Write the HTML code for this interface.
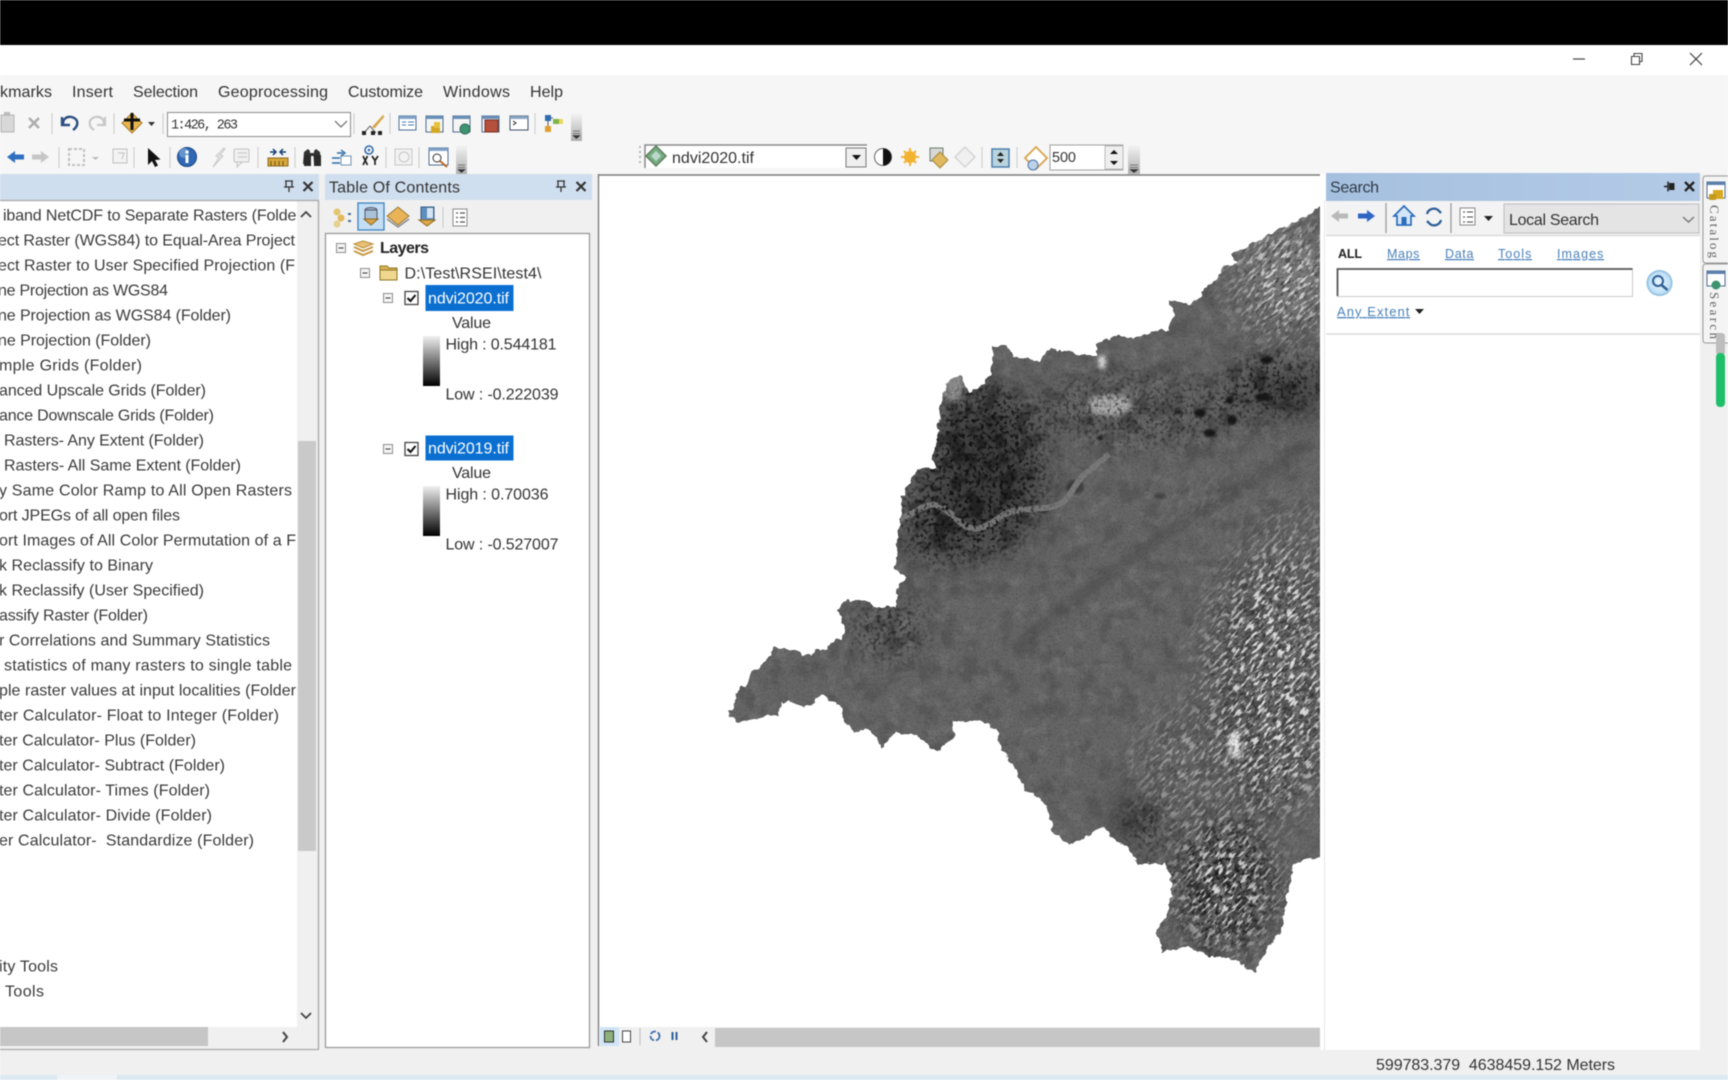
<!DOCTYPE html>
<html lang="en"><head><meta charset="utf-8"><title>ArcMap</title>
<style>
html,body{margin:0;padding:0;background:#fff;width:1728px;height:1080px;overflow:hidden}
svg{display:block;position:absolute;left:0;top:0;filter:blur(.45px)}
text{font-family:"Liberation Sans",sans-serif;font-size:16px;fill:#333}
.l{font-size:16px;fill:#3a3a3a}
.lnk{font-family:"Liberation Sans",sans-serif;font-size:12.5px;fill:#4a80b8;text-decoration:underline;letter-spacing:.6px}
</style></head><body>
<svg width="1728" height="1080" viewBox="0 0 1728 1080" xmlns="http://www.w3.org/2000/svg">
<defs>
<clipPath id="cl"><rect x="0" y="200" width="296" height="830"/></clipPath>
<clipPath id="cm"><rect x="600" y="176" width="720" height="850"/></clipPath>
<filter id="jag" x="-5%" y="-5%" width="110%" height="110%" color-interpolation-filters="sRGB"><feTurbulence type="fractalNoise" baseFrequency=".14" numOctaves="2" seed="7" result="n"/><feDisplacementMap in="SourceGraphic" in2="n" scale="8" xChannelSelector="R" yChannelSelector="G"/></filter>
<mask id="landM" maskUnits="userSpaceOnUse" x="600" y="170" width="730" height="860"><path filter="url(#jag)" fill="#fff" d="M1330 205L1320 207 1300 220 1277 230 1253 243 1233 255 1237 263 1223 267 1217 280 1202 290 1202 297 1187 303 1168 300 1175 313 1167 330 1143 335 1133 340 1117 335 1098 343 1097 355 1082 355 1063 350 1047 350 1040 360 1013 357 1007 347 992 347 993 363 988 377 980 387 970 393 960 375 945 383 943 397 940 413 937 440 932 460 937 467 920 467 912 480 902 495 903 508 900 520 897 540 896 570 906 578 898 585 896 600 896 607 872 607 870 600 847 600 839 608 841 620 847 630 839 640 831 642 827 650 816 650 810 655 796 652 786 648 773 648 769 658 753 670 747 683 737 690 735 703 728 712 737 722 761 718 778 715 782 702 810 706 820 695 841 707 843 718 855 733 869 728 882 747 896 732 916 735 937 752 955 735 953 722 982 720 998 733 1000 747 1016 770 1024 790 1039 797 1051 817 1051 830 1069 845 1102 827 1133 853 1137 865 1165 863 1173 887 1165 917 1155 932 1163 952 1188 947 1210 957 1231 957 1255 973 1259 963 1282 927 1288 890 1294 863 1320 857 1330 855Z"/></mask>
<filter id="b14" x="-50%" y="-50%" width="200%" height="200%"><feGaussianBlur stdDeviation="14"/></filter>
<filter id="b6" x="-50%" y="-50%" width="200%" height="200%"><feGaussianBlur stdDeviation="6"/></filter>
<filter id="b3" x="-50%" y="-50%" width="200%" height="200%"><feGaussianBlur stdDeviation="2.500"/></filter>
<filter id="b1" x="-50%" y="-50%" width="200%" height="200%"><feGaussianBlur stdDeviation="1"/></filter>
<filter id="b22" x="-50%" y="-50%" width="200%" height="200%"><feGaussianBlur stdDeviation="22"/></filter>
<filter id="spW" x="0" y="0" width="100%" height="100%" color-interpolation-filters="sRGB"><feTurbulence type="fractalNoise" baseFrequency=".11 .32" numOctaves="4" seed="3"/><feColorMatrix values="0 0 0 0 .88 0 0 0 0 .88 0 0 0 0 .88 5 0 0 0 -2.500"/></filter>
<filter id="spD" x="0" y="0" width="100%" height="100%" color-interpolation-filters="sRGB"><feTurbulence type="fractalNoise" baseFrequency=".14 .36" numOctaves="4" seed="21"/><feColorMatrix values="0 0 0 0 .14 0 0 0 0 .14 0 0 0 0 .14 5 0 0 0 -2.500"/></filter>
<filter id="spK" x="0" y="0" width="100%" height="100%" color-interpolation-filters="sRGB"><feTurbulence type="fractalNoise" baseFrequency=".26" numOctaves="4" seed="11"/><feColorMatrix values="0 0 0 0 .07 0 0 0 0 .07 0 0 0 0 .07 0 5 0 0 -2.500"/></filter>
<filter id="patch" x="0" y="0" width="100%" height="100%" color-interpolation-filters="sRGB"><feTurbulence type="fractalNoise" baseFrequency=".06" numOctaves="3" seed="31"/><feColorMatrix values="0 0 0 0 .07 0 0 0 0 .07 0 0 0 0 .07 6 0 0 0 -2.800"/></filter>
<filter id="mot" x="0" y="0" width="100%" height="100%" color-interpolation-filters="sRGB"><feTurbulence type="fractalNoise" baseFrequency=".05" numOctaves="4" seed="17"/><feColorMatrix values="0 0 0 0 .2 0 0 0 0 .2 0 0 0 0 .2 4 0 0 0 -1.900"/></filter>
<filter id="mot2" x="0" y="0" width="100%" height="100%" color-interpolation-filters="sRGB"><feTurbulence type="fractalNoise" baseFrequency=".08" numOctaves="4" seed="43"/><feColorMatrix values="0 0 0 0 .62 0 0 0 0 .62 0 0 0 0 .62 4 0 0 0 -2.100"/></filter>
<filter id="fine" x="0" y="0" width="100%" height="100%" color-interpolation-filters="sRGB"><feTurbulence type="fractalNoise" baseFrequency=".5" numOctaves="2" seed="5"/><feColorMatrix values="0 0 0 0 .2 0 0 0 0 .2 0 0 0 0 .2 3 0 0 0 -1.400"/></filter>
<mask id="mE" maskUnits="userSpaceOnUse" x="600" y="170" width="730" height="860"><rect x="600" y="170" width="730" height="860" fill="#000"/>
<g fill="#fff" filter="url(#b22)"><ellipse cx="1285" cy="280" rx="45" ry="55"/><ellipse cx="1275" cy="680" rx="65" ry="130"/><ellipse cx="1225" cy="885" rx="48" ry="65"/><ellipse cx="1300" cy="545" rx="28" ry="40" opacity=".5"/><ellipse cx="1175" cy="770" rx="35" ry="55" opacity=".55"/><ellipse cx="1200" cy="500" rx="30" ry="15" opacity=".3"/></g></mask>
<mask id="mK" maskUnits="userSpaceOnUse" x="600" y="170" width="730" height="860"><rect x="600" y="170" width="730" height="860" fill="#000"/>
<g fill="#fff" filter="url(#b14)"><ellipse cx="985" cy="470" rx="58" ry="85"/><ellipse cx="945" cy="520" rx="45" ry="42"/><ellipse cx="1140" cy="410" rx="110" ry="36" opacity=".5"/><ellipse cx="1275" cy="385" rx="50" ry="30" opacity=".85"/><ellipse cx="1225" cy="885" rx="48" ry="65" opacity=".85"/><ellipse cx="890" cy="630" rx="40" ry="30" opacity=".6"/><ellipse cx="1145" cy="825" rx="20" ry="28" opacity=".7"/><ellipse cx="1270" cy="690" rx="60" ry="120" opacity=".35"/></g></mask>
<linearGradient id="sw" x1="0" y1="0" x2="0" y2="1"><stop offset="0" stop-color="#f0f0f0"/><stop offset="1" stop-color="#000"/></linearGradient>
<linearGradient id="st" x1="0" y1="0" x2="1" y2="0"><stop offset="0" stop-color="#a5c0df"/><stop offset="1" stop-color="#b4cbe7"/></linearGradient>
<linearGradient id="gr" x1="0" y1="0" x2="0" y2="1"><stop offset="0" stop-color="#f4f4f4"/><stop offset="1" stop-color="#acacac"/></linearGradient>
<radialGradient id="sb"><stop offset="0" stop-color="#e8f4fc"/><stop offset=".8" stop-color="#bfe0f6"/><stop offset="1" stop-color="#7fb3d8"/></radialGradient>
</defs>

<!-- chrome -->
<rect width="1728" height="1080" fill="#f0f0f0"/>
<rect width="1728" height="45" fill="#000"/>
<rect y="45" width="1728" height="30" fill="#fff"/>
<rect y="75" width="1728" height="99" fill="#f6f6f6"/>
<rect x="0" y="1075" width="1728" height="5" fill="#dce9f1"/><rect x="57" y="1075" width="60" height="5" fill="#eef3f7"/>
<path d="M1573 59h12" stroke="#444" stroke-width="1.2"/>
<path d="M1631.500 56.500h8v8h-8zM1634 56v-2.500h8v8h-2.500" fill="none" stroke="#444" stroke-width="1.1"/>
<path d="M1690 53l12 12M1702 53l-12 12" stroke="#333" stroke-width="1.1"/>

<!-- menu -->
<text x="0" y="97" textLength="52">kmarks</text>
<text x="72" y="97" textLength="41">Insert</text>
<text x="133" y="97" textLength="65">Selection</text>
<text x="218" y="97" textLength="110">Geoprocessing</text>
<text x="348" y="97" textLength="75">Customize</text>
<text x="443" y="97" textLength="67">Windows</text>
<text x="530" y="97" textLength="33">Help</text>

<!-- toolbar 1 -->
<g fill="none" stroke="#c9c9c9" stroke-width="1"><path d="M52 113v21M114 113v21M163 113v21M354 113v21M390 113v21M535 113v21"/></g>
<rect x="1" y="115" width="13" height="17" fill="#d8d8d8" stroke="#b5b5b5"/><rect x="4" y="112" width="6" height="4" fill="#bbb"/>
<path d="M29 118l10 10M39 118l-10 10" stroke="#adadad" stroke-width="2.6"/>
<path d="M63 124c0-9 11-9 14-3 1 4-1 7-4 9M62 117v8h8" fill="none" stroke="#2d4f80" stroke-width="2.4"/>
<path d="M104 124c0-9-11-9-14-3-1 4 1 7 4 9M105 117v8h-8" fill="none" stroke="#c8c8c8" stroke-width="2.2"/>
<path d="M132 113l10 10-10 10-10-10z" fill="#e8b44e" stroke="#a67c25"/><path d="M132 113v17M124 120h16" stroke="#111" stroke-width="3"/>
<path d="M148 122h7l-3.500 4z" fill="#333"/>
<rect x="167.500" y="112.500" width="183" height="24" fill="#fff" stroke="#8c8c8c"/>
<text x="171" y="128.500" style="font-family:'Liberation Mono',monospace;font-size:13.500px" textLength="67">1:426, 263</text>
<path d="M335 121l6 6 6-6" fill="none" stroke="#777" stroke-width="1.3"/>
<path d="M364 133l6-7 6 7" fill="none" stroke="#666" stroke-width="1"/><rect x="362" y="131" width="4" height="4" fill="#222"/><rect x="371" y="131" width="4" height="4" fill="#222"/><rect x="378" y="131" width="4" height="4" fill="#222"/><path d="M372 127l11-12 1.500 1.500-10 12z" fill="#d6a545"/>
<rect x="399" y="116" width="17" height="14" fill="#fff" stroke="#4d6c8f"/><rect x="399" y="116" width="17" height="3" fill="#7fa3c9"/><path d="M402 122h4M402 125h4M408 122h6M408 125h6" stroke="#4878b0"/>
<rect x="426" y="116" width="17" height="16" fill="#f5f5f5" stroke="#4d6c8f"/><rect x="426" y="116" width="17" height="3" fill="#6a8fb8"/><path d="M431 126h9v7h-9z" fill="#d4a724"/><rect x="434" y="122" width="6" height="6" fill="#e6c13e"/>
<rect x="453" y="116" width="17" height="16" fill="#f5f5f5" stroke="#4d6c8f"/><rect x="453" y="116" width="17" height="3" fill="#6a8fb8"/><circle cx="465" cy="129" r="5" fill="#3e9470" stroke="#2b6a52"/>
<rect x="482" y="116" width="17" height="16" fill="#f5f5f5" stroke="#4d6c8f"/><rect x="482" y="116" width="17" height="3" fill="#6a8fb8"/><rect x="485" y="120" width="13" height="12" fill="#b5503c" stroke="#7b2c1e"/>
<rect x="510" y="116" width="18" height="14" fill="#fff" stroke="#3d4f66"/><rect x="510" y="116" width="18" height="3" fill="#8aa6c4"/><path d="M513 121l3 2-3 2" fill="none" stroke="#222"/>
<rect x="545" y="115" width="6" height="6" fill="#2e6cb0"/><rect x="545" y="126" width="6" height="6" fill="#e0a030"/><rect x="553" y="119" width="6" height="5" fill="#7fb24a"/><rect x="559" y="119" width="4" height="5" fill="#e8d85c"/><path d="M548 121v5M551 118h2" stroke="#555"/>
<rect x="571" y="113" width="11" height="28" fill="url(#gr)"/><path d="M573 131h7M573 133.500h7M573 135.500h7l-3.500 3z" fill="#333" stroke="#333" stroke-width=".6"/>

<!-- toolbar 2 -->
<g fill="none" stroke="#c9c9c9"><path d="M59 147v21M134 147v21M170 147v21M258 147v21M295 147v21M386 147v21M419 147v21M982 147v21M1017 147v21"/></g>
<path d="M7 157l8-6v3.500h9v5h-9v3.500z" fill="#2f6fc0"/>
<path d="M49 157l-8-6v3.500h-9v5h9v3.500z" fill="#c6c6c6"/>
<rect x="69" y="149" width="15" height="16" fill="none" stroke="#c0c0c0" stroke-width="2" stroke-dasharray="3 2"/><path d="M92 157h7l-3.500 3z" fill="#bbb"/>
<rect x="113" y="149" width="14" height="14" fill="#f2f2f2" stroke="#c0c0c0"/><path d="M118 153h6l-2 6" stroke="#c0c0c0" fill="none"/>
<path d="M148 148l0 17 4-4 3 6 3-1.500-3-5.500 5.500-.5z" fill="#111"/>
<circle cx="187" cy="157" r="9.500" fill="#2f68b4" stroke="#1b4480"/><circle cx="184" cy="153" r="5" fill="#8ab2e0" opacity=".6"/><rect x="185.500" y="155" width="3" height="8" fill="#fff"/><rect x="185.500" y="150.500" width="3" height="3" fill="#fff"/>
<path d="M224 148l-8 8 3 1-6 10 10-11-3-1 5-6z" fill="#e8e8e8" stroke="#c8c8c8"/>
<rect x="234" y="149" width="15" height="13" rx="1" fill="#efefef" stroke="#c4c4c4"/><path d="M237 162v5l5-5M238 153h9M238 157h9" stroke="#c4c4c4" fill="none"/>
<rect x="268" y="158" width="20" height="8" fill="#d6a63c" stroke="#8d6a1c"/><path d="M271 161v5M275 161v5M279 161v5M283 161v5" stroke="#6e5212"/><path d="M270 152h5M273 149l3 3-3 3M286 152h-5M283 149l-3 3 3 3" stroke="#123f77" stroke-width="1.500" fill="none"/>
<path d="M304 152l4-3 2 2v2h4v-2l2-2 4 3 1 12h-7l-.5-8h-3l-.5 8h-7z" fill="#333"/><rect x="304" y="155" width="7" height="11" fill="#2a2a2a"/><rect x="314" y="155" width="7" height="11" fill="#2a2a2a"/>
<rect x="341" y="156" width="10" height="9" fill="#fff" stroke="#7090b0"/><path d="M332 163h8M332 158h8M337 153h6M341 150l4 3-4 3" stroke="#2b6ca8" stroke-width="1.400" fill="none"/>
<circle cx="369" cy="150" r="4" fill="none" stroke="#2e6aa8" stroke-width="1.500"/><circle cx="369" cy="150" r="1.300" fill="#2e6aa8"/><path d="M363 156l4.500 9M367.500 156l-4.500 9M372 156l3 4.500M378 156l-3 4.500v4.500" stroke="#222" stroke-width="1.700" fill="none"/>
<rect x="395" y="149" width="17" height="16" fill="#f2f2f2" stroke="#c5c5c5"/><circle cx="404" cy="157" r="5" fill="none" stroke="#c5c5c5"/>
<rect x="429" y="148" width="19" height="17" fill="#fff" stroke="#4d6c8f"/><rect x="429" y="148" width="19" height="3" fill="#7fa3c9"/><circle cx="437" cy="158" r="4" fill="none" stroke="#333"/><path d="M440 161l7 6" stroke="#b86b2b" stroke-width="2"/>
<rect x="456" y="145" width="11" height="30" fill="url(#gr)"/><path d="M458 165h7M458 167.500h7M458 169.500h7l-3.500 3z" fill="#333" stroke="#333" stroke-width=".6"/>

<!-- raster toolbar -->
<path d="M640 146v20" stroke="#b9b9b9" stroke-width="2" stroke-dasharray="2 3"/>
<rect x="645" y="145" width="222" height="23" fill="#fff"/><path d="M645 168v-23h222" fill="none" stroke="#8a8a8a" stroke-width="1.500"/>
<rect x="846" y="148" width="20" height="19" fill="#efefef" stroke="#777" stroke-width="1"/><path d="M852 155h9l-4.500 5z" fill="#111"/>
<path d="M656 146l10 10-10 10-10-10z" fill="#76ad86" stroke="#5e7f55" stroke-width="1.500"/><path d="M656 151l5 5-5 5-5-5z" fill="#bcd8cb"/>
<text x="672" y="163" textLength="82">ndvi2020.tif</text>
<circle cx="883" cy="157" r="8.500" fill="#fff" stroke="#666"/><path d="M883 148.500a8.500 8.500 0 0 1 0 17z" fill="#111"/>
<circle cx="910" cy="157" r="6" fill="#f5b32a"/><path d="M910 148v18M901 157h18M904 151l12 12M916 151l-12 12" stroke="#f2b233" stroke-width="2"/>
<rect x="930" y="148" width="13" height="13" fill="#d8d8d8" stroke="#6a7f6a"/><path d="M940 152l8 8-8 8-8-8z" fill="#e0b860" stroke="#a88a3a"/>
<path d="M965 147l10 10-10 10-10-10z" fill="#f0f0f0" stroke="#d5d5d5" stroke-width="1.500"/>
<rect x="992" y="149" width="17" height="18" fill="#b9d4dc" stroke="#4d7fae" stroke-width="1.500"/><path d="M997 156h7l-3.500-4zM997 159h7l-3.500 4z" fill="#222"/>
<path d="M1036 147l11 11-11 11-11-11z" fill="#fff" stroke="#d8a44a" stroke-width="1.800"/><circle cx="1033" cy="165" r="5" fill="#bcd2ea" stroke="#4a74a8"/>
<rect x="1050" y="145" width="73" height="25" fill="#fff" stroke="#a0a0a0"/><text x="1052" y="162" style="font-size:14.500px" textLength="24">500</text>
<rect x="1105" y="146" width="18" height="23" fill="#efefef" stroke="#bbb"/><path d="M1114 150l-4 4h8zM1114 165l-4-4h8z" fill="#111"/>
<rect x="1128" y="145" width="12" height="30" fill="url(#gr)"/><path d="M1130 165h8M1130 167.500h8M1130 169.500h8l-4 3z" fill="#333" stroke="#333" stroke-width=".6"/>

<!-- left panel -->
<rect x="0" y="174" width="319" height="26" fill="#cfdeee"/>
<path d="M285 181h8M286 181v6h6v-6M284 187h10M289 187v5" stroke="#333" stroke-width="1.300" fill="none"/>
<path d="M303.500 182l9 9M312.500 182l-9 9" stroke="#333" stroke-width="2.200"/>
<rect x="0" y="200" width="319" height="850" fill="#f0f0f0"/>
<rect x="0" y="201" width="297" height="826" fill="#fff"/>
<path d="M0 200.500h319M318.500 200v849M0 1049.500h319" stroke="#a8a8a8" stroke-width="1.300" fill="none"/>
<rect x="298" y="441" width="18" height="410" fill="#c9c9c9"/>
<path d="M301 217l5-5 5 5M301 1013l5 5 5-5" fill="none" stroke="#444" stroke-width="1.800"/>
<rect x="0" y="1027" width="208" height="19" fill="#c6c6c6"/>
<path d="M283 1032l4 5-4 5" fill="none" stroke="#444" stroke-width="2"/>
<g clip-path="url(#cl)" class="l">
<text class="l" x="3" y="220.500" textLength="293.400">iband NetCDF to Separate Rasters (Folde</text>
<text class="l" x="-2" y="245.500" textLength="297">ect Raster (WGS84) to Equal-Area Project</text>
<text class="l" x="-2" y="270.500" textLength="297">ect Raster to User Specified Projection (F</text>
<text class="l" x="-2" y="295.500" textLength="170">ne Projection as WGS84</text>
<text class="l" x="-2" y="320.500" textLength="233">ne Projection as WGS84 (Folder)</text>
<text class="l" x="-2" y="345.500" textLength="153">ne Projection (Folder)</text>
<text class="l" x="-1" y="370.500" textLength="143">mple Grids (Folder)</text>
<text class="l" x="-1" y="395.500" textLength="207">anced Upscale Grids (Folder)</text>
<text class="l" x="-1" y="420.500" textLength="215">ance Downscale Grids (Folder)</text>
<text class="l" x="4" y="445.500" textLength="200">Rasters- Any Extent (Folder)</text>
<text class="l" x="4" y="470.500" textLength="237">Rasters- All Same Extent (Folder)</text>
<text class="l" x="-1" y="495.500" textLength="293">y Same Color Ramp to All Open Rasters</text>
<text class="l" x="-1" y="520.500" textLength="181">ort JPEGs of all open files</text>
<text class="l" x="-1" y="545.500" textLength="297">ort Images of All Color Permutation of a F</text>
<text class="l" x="-1" y="570.500" textLength="154">k Reclassify to Binary</text>
<text class="l" x="-1" y="595.500" textLength="205">k Reclassify (User Specified)</text>
<text class="l" x="-1" y="620.500" textLength="149">assify Raster (Folder)</text>
<text class="l" x="-1" y="645.500" textLength="271">r Correlations and Summary Statistics</text>
<text class="l" x="4" y="670.500" textLength="288">statistics of many rasters to single table</text>
<text class="l" x="-1" y="695.500" textLength="297">ple raster values at input localities (Folder</text>
<text class="l" x="-1" y="720.500" textLength="280">ter Calculator- Float to Integer (Folder)</text>
<text class="l" x="-1" y="745.500" textLength="197">ter Calculator- Plus (Folder)</text>
<text class="l" x="-1" y="770.500" textLength="226">ter Calculator- Subtract (Folder)</text>
<text class="l" x="-1" y="795.500" textLength="211">ter Calculator- Times (Folder)</text>
<text class="l" x="-1" y="820.500" textLength="213">ter Calculator- Divide (Folder)</text>
<text class="l" x="-1" y="845.500" xml:space="preserve" textLength="255">er Calculator-  Standardize (Folder)</text>
<text class="l" x="-1" y="971.500" textLength="59">ity Tools</text>
<text class="l" x="5" y="996.500" textLength="39">Tools</text>
</g>

<!-- TOC -->
<rect x="325" y="174" width="267" height="26" fill="#d0dfef"/>
<text x="329" y="192.500" textLength="131">Table Of Contents</text>
<path d="M557 181h8M558 181v6h6v-6M556 187h10M561 187v5" stroke="#333" stroke-width="1.300" fill="none"/>
<path d="M576.500 182l9 9M585.500 182l-9 9" stroke="#333" stroke-width="2.200"/>
<circle cx="337" cy="212" r="3.500" fill="#e3c56f"/><circle cx="341" cy="218" r="3.500" fill="#e3b85a"/><circle cx="337" cy="224" r="3.500" fill="#e6d08e"/><path d="M348 214h3M348 221h3" stroke="#4a6e98" stroke-width="2"/>
<rect x="358" y="203" width="26" height="27" fill="#c4def4" stroke="#3c82c0" stroke-width="1.300"/>
<ellipse cx="371" cy="210" rx="6" ry="2.500" fill="#9bb4cf" stroke="#556"/><rect x="365" y="210" width="12" height="10" fill="#a8c2da" stroke="#556"/><path d="M364 219l7 6 7-6z" fill="#d9a34c" stroke="#8d6a1c"/>
<path d="M398 207l11 9-11 9-11-9z" fill="#e9b357" stroke="#9a7a3a"/><path d="M387 219l11 8 11-8" fill="none" stroke="#888" stroke-width="1.500"/>
<rect x="421" y="207" width="13" height="13" fill="#5d8fbe" stroke="#365a84"/><rect x="427" y="208" width="6" height="10" fill="#d4e4f2"/><path d="M419 220l8 6 8-6z" fill="#e2a84c" stroke="#8d6a1c"/>
<path d="M443 207v21" stroke="#c9c9c9"/>
<rect x="453" y="209" width="14" height="17" fill="#fff" stroke="#8a8a8a"/><path d="M456 213h2M460 213h5M456 217.500h2M460 217.500h5M456 222h2M460 222h5" stroke="#555" stroke-width="1.200"/>
<rect x="325.500" y="233.500" width="264" height="814" fill="#fff" stroke="#9c9c9c" stroke-width="1.300"/>
<g fill="#f4f4f4" stroke="#8e8e8e"><rect x="336.500" y="243.500" width="9" height="9"/><rect x="360.500" y="268.500" width="9" height="9"/><rect x="383.500" y="293.500" width="9" height="9"/><rect x="383.500" y="444.500" width="9" height="9"/></g>
<path d="M338.500 248h5M362.500 273h5M385.500 298h5M385.500 449h5" stroke="#333"/>
<path d="M363 241l10 3-10 4-9-4z" fill="#e9c173" stroke="#b58a3a"/><path d="M354 247l9 4 10-4M354 251l9 4 10-4" fill="none" stroke="#c79843" stroke-width="2"/>
<text x="380" y="253" style="font-weight:bold;fill:#222" textLength="49">Layers</text>
<path d="M380 266h7l2 2h8v3h-17z" fill="#d9b54d" stroke="#8d7528"/><rect x="380" y="270" width="17" height="10" fill="#efd88e" stroke="#8d7528"/>
<text x="404.500" y="278.500" textLength="137">D:\Test\RSEI\test4\</text>
<rect x="405" y="291.500" width="13" height="13" fill="#fff" stroke="#444" stroke-width="1.300"/><path d="M407.500 298l3 3 5-6" fill="none" stroke="#111" stroke-width="2"/>
<rect x="425.500" y="285" width="88" height="26" fill="#0a6fd0"/>
<text x="428" y="303.500" style="fill:#fff" textLength="81">ndvi2020.tif</text>
<text x="452" y="328" textLength="39">Value</text>
<rect x="423" y="336" width="17" height="50" fill="url(#sw)"/>
<text x="445.500" y="349.500" textLength="111">High : 0.544181</text>
<text x="445.500" y="399.500" textLength="113">Low : -0.222039</text>
<rect x="405" y="442.500" width="13" height="13" fill="#fff" stroke="#444" stroke-width="1.300"/><path d="M407.500 449l3 3 5-6" fill="none" stroke="#111" stroke-width="2"/>
<rect x="425.500" y="435.500" width="88" height="25" fill="#0a6fd0"/>
<text x="428" y="453.500" style="fill:#fff" textLength="81">ndvi2019.tif</text>
<text x="452" y="478" textLength="39">Value</text>
<rect x="423" y="486" width="17" height="50" fill="url(#sw)"/>
<text x="445.500" y="499.500" textLength="103">High : 0.70036</text>
<text x="445.500" y="549.500" textLength="113">Low : -0.527007</text>

<!-- map -->
<rect x="598" y="174" width="728" height="853" fill="#fff"/>
<path d="M599 175h722" stroke="#7a7a7a" stroke-width="1.500"/><path d="M598.500 174v872" stroke="#777" stroke-width="1.300"/>
<g clip-path="url(#cm)"><g mask="url(#landM)">
<rect x="600" y="170" width="730" height="860" fill="#666"/>
<rect x="600" y="170" width="730" height="860" filter="url(#mot)" opacity=".25"/>
<rect x="600" y="170" width="730" height="860" filter="url(#mot2)" opacity=".2"/>
<g filter="url(#b22)"><ellipse cx="985" cy="470" rx="50" ry="75" fill="#3a3a3a"/><ellipse cx="945" cy="525" rx="35" ry="30" fill="#404040"/></g>
<g filter="url(#b14)"><ellipse cx="1285" cy="392" rx="40" ry="16" fill="#3a3a3a"/><ellipse cx="1130" cy="815" rx="15" ry="28" fill="#444"/><ellipse cx="1285" cy="690" rx="40" ry="110" fill="#727272"/><ellipse cx="1285" cy="270" rx="40" ry="45" fill="#7e7e7e"/><ellipse cx="1225" cy="885" rx="42" ry="58" fill="#686868"/></g>
<rect x="600" y="170" width="730" height="860" filter="url(#patch)" mask="url(#mK)" opacity=".6"/>
<g filter="url(#b3)"><ellipse cx="1110" cy="405" rx="22" ry="11" fill="#ababab"/><ellipse cx="1235" cy="745" rx="7" ry="14" fill="#eee"/><ellipse cx="952" cy="385" rx="12" ry="16" fill="#8f8f8f"/><ellipse cx="1102" cy="362" rx="4" ry="7" fill="#e8e8e8"/></g>
<g filter="url(#b1)" fill="#161616"><ellipse cx="1263" cy="397" rx="8" ry="4"/><ellipse cx="1230" cy="400" rx="4" ry="4"/><ellipse cx="1232" cy="420" rx="5" ry="5"/><ellipse cx="1200" cy="413" rx="6" ry="4"/><ellipse cx="1210" cy="433" rx="6" ry="4"/><ellipse cx="1178" cy="412" rx="4" ry="2"/><ellipse cx="1100" cy="438" rx="3" ry="2"/><ellipse cx="1267" cy="360" rx="7" ry="4"/><ellipse cx="1160" cy="496" rx="6" ry="3" opacity=".45"/><ellipse cx="1075" cy="487" rx="9" ry="7" opacity=".5"/><ellipse cx="1045" cy="510" rx="4" ry="3" opacity=".5"/><ellipse cx="1090" cy="420" rx="3" ry="5" opacity=".6"/></g>
<path d="M1313 443L1233 493 1167 533 1060 610 1014 650" fill="none" stroke="#4a4a4a" stroke-width="13" opacity=".4" filter="url(#b3)"/>
<path d="M900 519c12-5 20-12 30-14s20 8 30 17 20 8 30 2 14-12 30-14 30-1 40-6 15-22 25-30 18-14 24-20" fill="none" stroke="#7a7a7a" stroke-width="6"/>
<rect x="600" y="170" width="730" height="860" filter="url(#fine)" opacity=".3"/>
<rect x="600" y="170" width="730" height="860" filter="url(#spK)" mask="url(#mK)"/>
<g mask="url(#mE)"><g transform="rotate(-48 1220 590)"><rect x="863" y="255" width="714" height="670" filter="url(#spD)" opacity=".65"/><rect x="863" y="255" width="714" height="670" filter="url(#spW)"/></g></g>
</g></g>
<rect x="599" y="1027" width="116" height="19" fill="#f0f0f0"/>
<rect x="600" y="1027" width="19" height="19" fill="#cfe4f4"/>
<rect x="604.500" y="1031" width="9" height="11" fill="#8fb07a" stroke="#333"/>
<rect x="622.500" y="1031" width="8" height="11" fill="#fff" stroke="#444"/>
<path d="M640 1028v17" stroke="#bbb"/>
<circle cx="655" cy="1036" r="4.500" fill="none" stroke="#3a6da8" stroke-width="1.800" stroke-dasharray="6 2"/>
<path d="M672.500 1032v8M676.500 1032v8" stroke="#2e5f98" stroke-width="2"/>
<path d="M707 1032l-4 5 4 5" fill="none" stroke="#444" stroke-width="2"/>
<rect x="715" y="1028" width="605" height="19" fill="#c6c6c6"/>

<!-- search -->
<rect x="1320" y="174" width="6" height="876" fill="#fff"/><path d="M1324.500 200v850" stroke="#e6e6e6"/>
<rect x="1326" y="173" width="374" height="28" fill="url(#st)"/>
<text x="1330" y="192.500" style="fill:#2f3b48" textLength="49">Search</text>
<path d="M1664 186.500h4M1668 181.500v10" stroke="#222" stroke-width="1.400" fill="none"/><rect x="1669" y="183" width="5.500" height="7" fill="#222"/>
<path d="M1685 182l9 9M1694 182l-9 9" stroke="#222" stroke-width="2.300"/>
<rect x="1326" y="201" width="374" height="34" fill="#f3f3f3"/>
<path d="M1331 216l8-6v3.500h9v5h-9v3.500z" fill="#b9b9b9"/>
<path d="M1375 216l-8-6v3.500h-9v5h9v3.500z" fill="#2f66c4"/>
<path d="M1386 203v30M1451 203v30" stroke="#9c9c9c" stroke-width="1.300"/>
<path d="M1394 216l10-10 10 10h-3v9h-14v-9z" fill="#d5e6f7" stroke="#2c6dbd" stroke-width="1.700"/><rect x="1401.500" y="217" width="5" height="8" fill="#2c6dbd"/>
<path d="M1427 214a7 7 0 0 1 12-3l2 2M1441 220a7 7 0 0 1-12 3l-2-2" fill="none" stroke="#2e5f98" stroke-width="2.300"/>
<rect x="1460" y="208" width="15" height="17" fill="#fff" stroke="#888"/><path d="M1463 212h2M1467 212h6M1463 217h2M1467 217h6M1463 222h2M1467 222h6" stroke="#444" stroke-width="1.100"/>
<path d="M1484 216h9l-4.500 5z" fill="#222"/>
<rect x="1504" y="204" width="195" height="29" fill="#e4e4e4" stroke="#bdbdbd"/>
<text x="1509" y="225" style="fill:#333" textLength="90">Local Search</text>
<path d="M1683 217l5.500 5 5.500-5" fill="none" stroke="#777" stroke-width="1.400"/>
<rect x="1326" y="235" width="374" height="815" fill="#fff"/>
<path d="M1326 235.500h374M1326 334h374" stroke="#dcdcdc" stroke-width="1.500"/>
<text x="1338" y="258" style="font-size:12.500px;font-weight:bold;fill:#222" textLength="24">ALL</text>
<text class="lnk" x="1387" y="258" textLength="33">Maps</text>
<text class="lnk" x="1445" y="258" textLength="29">Data</text>
<text class="lnk" x="1498" y="258" textLength="34">Tools</text>
<text class="lnk" x="1557" y="258" textLength="47">Images</text>
<rect x="1337.500" y="269" width="295" height="27.500" fill="#fff" stroke="#c9c9c9"/><path d="M1337.500 296v-27h295" fill="none" stroke="#555" stroke-width="1.800"/>
<circle cx="1659.500" cy="283" r="13" fill="url(#sb)"/>
<circle cx="1658" cy="281" r="5" fill="none" stroke="#2f5f94" stroke-width="2"/><path d="M1661.500 285l6 5" stroke="#2f5f94" stroke-width="2.500"/>
<text class="lnk" style="font-size:13px" x="1337" y="316" textLength="73">Any Extent</text>
<path d="M1415 309h9l-4.500 5z" fill="#222"/>

<!-- side tabs -->
<path d="M1728 176h-22q-3 0-3 3v81q0 3 3 3h22" fill="#f4f4f4" stroke="#9a9a9a"/>
<path d="M1728 264h-22q-3 0-3 3v73q0 3 3 3h22" fill="#f4f4f4" stroke="#9a9a9a"/>
<rect x="1707" y="182" width="18" height="16" fill="#fff" stroke="#4d6c8f"/><rect x="1707" y="182" width="18" height="3" fill="#5b82ad"/><rect x="1713" y="190" width="10" height="9" fill="#d7a921"/><rect x="1709" y="194" width="7" height="6" fill="#c49a1e"/>
<rect x="1707" y="271" width="18" height="15" fill="#fff" stroke="#4d6c8f"/><rect x="1707" y="271" width="18" height="3" fill="#5b82ad"/><circle cx="1716" cy="285" r="4.500" fill="#3e9470"/>
<text transform="translate(1710 205) rotate(90)" style="font-family:'Liberation Serif',serif;font-size:13px;fill:#666" textLength="53">Catalog</text>
<text transform="translate(1710 292) rotate(90)" style="font-family:'Liberation Serif',serif;font-size:13px;fill:#666" textLength="47">Search</text>
<rect x="1716" y="333" width="9" height="22" rx="3" fill="#bdbdbd"/>
<rect x="1716" y="353" width="9" height="54" rx="4" fill="#1fbf6a"/>

<!-- status -->
<text x="1376" y="1070" style="fill:#333" textLength="239" xml:space="preserve">599783.379  4638459.152 Meters</text>
</svg>
</body></html>
